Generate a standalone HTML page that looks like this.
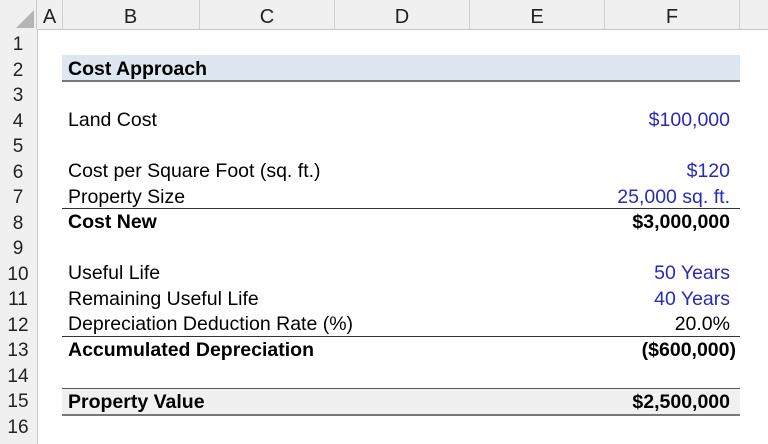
<!DOCTYPE html><html><head><style>
body{margin:0;width:768px;height:444px;background:#fff;position:relative;overflow:hidden;font-family:"Liberation Sans",Arial,sans-serif}
.hdr{position:absolute;top:0;left:0;width:768px;height:29px;background:#f0f0f0;border-bottom:1px solid #c8c8c8}
.col{position:absolute;top:0;height:29px;line-height:34px;text-align:center;font-size:20px;color:#222;border-right:1px solid #d0d0d0}
.rh{position:absolute;left:0;width:36px;text-align:center;font-size:19px;color:#222;height:25.5px;line-height:29px}
.t{position:absolute;font-size:19.5px;color:#000;white-space:nowrap;line-height:29px}
.r{right:38px;text-align:right}
.b{font-weight:bold}.bl{color:#2a2ab8}
.ln{position:absolute;left:62px;width:678px;height:1px;background:#333}
</style></head><body>
<div class="hdr"></div>
<div style="position:absolute;left:0;top:0;width:36px;height:29px;border-right:1px solid #c8c8c8"></div>
<svg style="position:absolute;left:16px;top:10px" width="18" height="18"><polygon points="18,0 18,18 0,18" fill="#b4b4b4"/></svg>
<div class="col" style="left:37px;width:25px">A</div>
<div class="col" style="left:62px;width:137px">B</div>
<div class="col" style="left:200px;width:134px">C</div>
<div class="col" style="left:335px;width:134px">D</div>
<div class="col" style="left:470px;width:134px">E</div>
<div class="col" style="left:605px;width:134px">F</div>
<div style="position:absolute;left:0;top:29px;width:37px;height:415px;background:#f0f0f0;border-right:1px solid #c8c8c8"></div>
<div class="rh" style="top:30px">1</div><div class="rh" style="top:55.5px">2</div><div class="rh" style="top:81px">3</div><div class="rh" style="top:106.5px">4</div><div class="rh" style="top:132px">5</div><div class="rh" style="top:157.5px">6</div><div class="rh" style="top:183px">7</div><div class="rh" style="top:208.5px">8</div><div class="rh" style="top:234px">9</div><div class="rh" style="top:259.5px">10</div><div class="rh" style="top:285px">11</div><div class="rh" style="top:310.5px">12</div><div class="rh" style="top:336px">13</div><div class="rh" style="top:361.5px">14</div><div class="rh" style="top:387px">15</div><div class="rh" style="top:412.5px">16</div>
<div style="position:absolute;left:62px;top:55px;width:678px;height:25px;background:#dde7f1;border-bottom:2px solid #777"></div>
<div style="position:absolute;left:62px;top:388px;width:678px;height:25px;background:#f0f0f0;border-top:1px solid #555;border-bottom:2px solid #777"></div>
<div class="ln" style="top:208px"></div>
<div class="ln" style="top:336px"></div>
<div class="t b" style="left:68px;top:55px">Cost Approach</div>
<div class="t" style="left:68px;top:106px">Land Cost</div><div class="t r bl" style="top:106px">$100,000</div>
<div class="t" style="left:68px;top:157px">Cost per Square Foot (sq. ft.)</div><div class="t r bl" style="top:157px">$120</div>
<div class="t" style="left:68px;top:182.5px">Property Size</div><div class="t r bl" style="top:182.5px">25,000 sq. ft.</div>
<div class="t b" style="left:68px;top:208px">Cost New</div><div class="t r b" style="top:208px">$3,000,000</div>
<div class="t" style="left:68px;top:259px">Useful Life</div><div class="t r bl" style="top:259px">50 Years</div>
<div class="t" style="left:68px;top:284.5px">Remaining Useful Life</div><div class="t r bl" style="top:284.5px">40 Years</div>
<div class="t" style="left:68px;top:310px">Depreciation Deduction Rate (%)</div><div class="t r" style="top:310px">20.0%</div>
<div class="t b" style="left:68px;top:336px">Accumulated Depreciation</div><div class="t r b" style="top:336px;right:32px">($600,000)</div>
<div class="t b" style="left:68px;top:387.5px">Property Value</div><div class="t r b" style="top:387.5px">$2,500,000</div>
</body></html>
